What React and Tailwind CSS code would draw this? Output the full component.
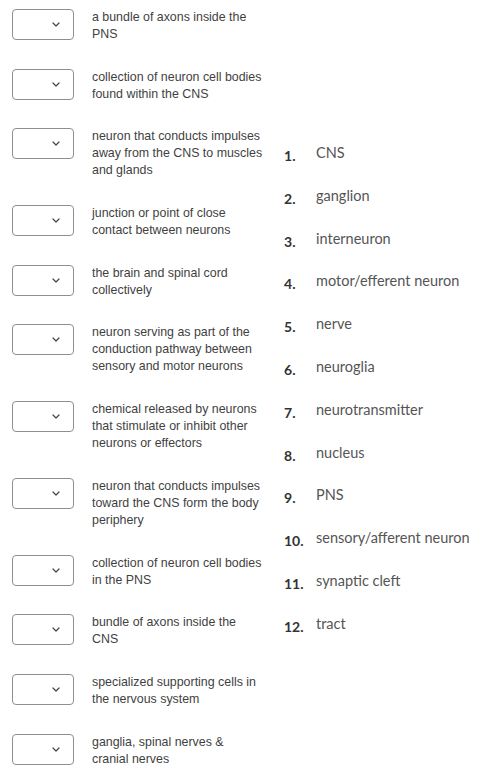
import React from "react";

const questions = [
  "a bundle of axons inside the PNS",
  "collection of neuron cell bodies found within the CNS",
  "neuron that conducts impulses away from the CNS to muscles and glands",
  "junction or point of close contact between neurons",
  "the brain and spinal cord collectively",
  "neuron serving as part of the conduction pathway between sensory and motor neurons",
  "chemical released by neurons that stimulate or inhibit other neurons or effectors",
  "neuron that conducts impulses toward the CNS form the body periphery",
  "collection of neuron cell bodies in the PNS",
  "bundle of axons inside the CNS",
  "specialized supporting cells in the nervous system",
  "ganglia, spinal nerves & cranial nerves",
];

const answers = [
  "CNS",
  "ganglion",
  "interneuron",
  "motor/efferent neuron",
  "nerve",
  "neuroglia",
  "neurotransmitter",
  "nucleus",
  "PNS",
  "sensory/afferent neuron",
  "synaptic cleft",
  "tract",
];

function Chevron() {
  return (
    <svg width="8" height="5" viewBox="0 0 8 5" fill="none">
      <path d="M1 1l3 3 3-3" stroke="#444" strokeWidth="1.2" strokeLinecap="round" strokeLinejoin="round" />
    </svg>
  );
}

function App() {
  return (
    <div className="w-[477px] min-h-[772px] bg-white flex" style={{ fontFamily: '"Liberation Sans", Arial, sans-serif' }}>
      {/* Left: dropdowns with descriptions */}
      <div className="flex flex-col gap-[25.7px] pl-3 pt-[9px] w-[264px] shrink-0">
        {questions.map((text, i) => (
          <div key={i} className="flex items-start gap-[18px]">
            <div className="w-[62px] h-[31px] shrink-0 border border-[#8f8f8f] rounded-[4px] flex items-center justify-end pr-[13px]">
              <Chevron />
            </div>
            <p className="w-[170.5px] text-[12.4px] leading-[17px] text-[#3f3f3f]">{text}</p>
          </div>
        ))}
      </div>

      {/* Right: numbered answer bank */}
      <div className="flex flex-col gap-[22.8px] pl-5 pt-[143px]" style={{ fontFamily: 'Lato, "Open Sans", sans-serif' }}>
        {answers.map((a, i) => (
          <div key={a} className="flex items-start h-[20px]">
            <span className="w-[32px] shrink-0 pt-[3px] text-[14px] leading-[20px] font-bold text-[#333]">{i + 1}.</span>
            <span className="text-[14.5px] leading-[20px] text-[#555]">{a}</span>
          </div>
        ))}
      </div>
    </div>
  );
}

export default App;
